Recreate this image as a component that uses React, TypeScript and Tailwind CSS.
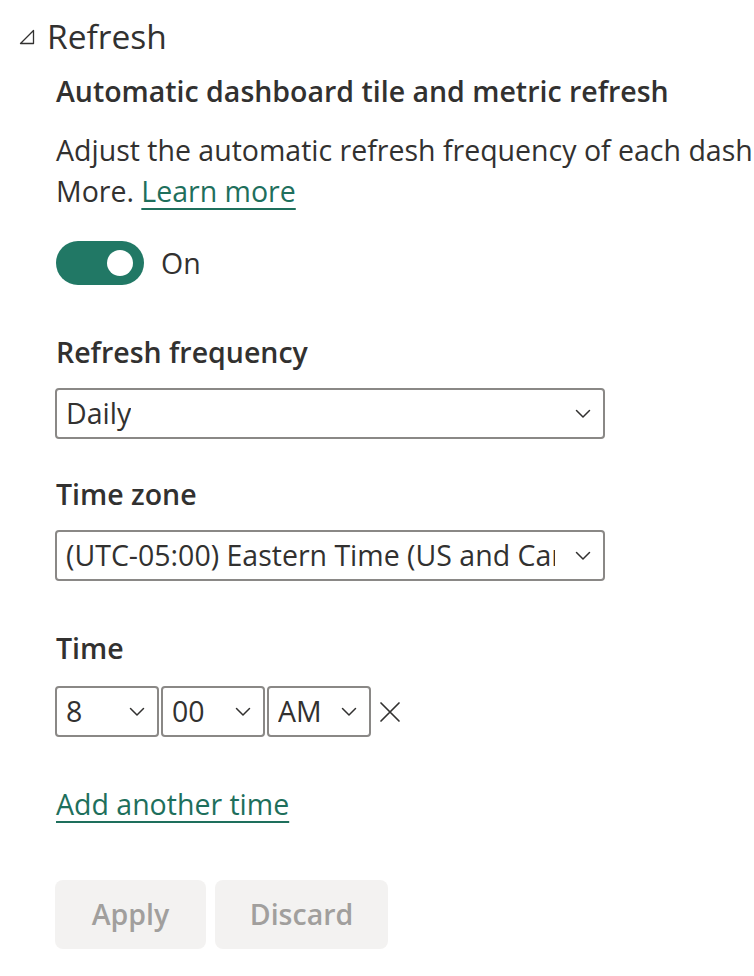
import React, { useState } from 'react';

const Chevron = () => (
  <svg width="16" height="10" viewBox="0 0 16 10" fill="none" className="shrink-0">
    <path d="M1.5 1.5 L8 8 L14.5 1.5" stroke="#323130" strokeWidth="1.5" strokeLinecap="round" strokeLinejoin="round" />
  </svg>
);

const Select = ({ value, className }: { value: string; className: string }) => (
  <div
    className={`flex items-center justify-between gap-[20px] h-[51px] border-2 border-[#8a8886] rounded-[4px] pl-[9px] pr-[12px] text-[28.5px] text-[#323130] whitespace-nowrap ${className}`}
  >
    <span className="overflow-hidden">{value}</span>
    <Chevron />
  </div>
);

const App = () => {
  const [on, setOn] = useState(true);

  return (
    <div className="w-[754px] h-[976px] overflow-hidden bg-white text-[#323130] font-['Segoe_UI','Open_Sans',sans-serif]">
      <div className="flex items-center pt-[12px] pl-[19px] h-[60px]">
        <svg width="16" height="16" viewBox="0 0 16 16" fill="none" className="mt-[2px]">
          <path d="M14.5 1.5 L14.5 14.5 L1.5 14.5 Z" stroke="#323130" strokeWidth="1.3" strokeLinejoin="round" />
        </svg>
        <span className="ml-[12px] text-[33.5px] leading-[48px]">Refresh</span>
      </div>

      <div className="pl-[56px]">
        <div className="mt-[11px] text-[28.5px] leading-[40px] font-semibold whitespace-nowrap">
          Automatic dashboard tile and metric refresh
        </div>

        <div className="mt-[19px] text-[28.5px] leading-[41px] whitespace-nowrap">
          Adjust the automatic refresh frequency of each dashboard tile and metric. Refresh Now is still available in
          <br />
          More.{' '}
          <a href="#" className="text-[#1e6f5c] underline underline-offset-[6px] decoration-2">
            Learn more
          </a>
        </div>

        <div className="mt-[29px] flex items-center h-[44px]">
          <button
            onClick={() => setOn(!on)}
            className={`relative w-[88px] h-[44px] rounded-full ${on ? 'bg-[#217865]' : 'bg-[#8a8886]'}`}
          >
            <span
              className={`absolute top-[9px] w-[26px] h-[26px] rounded-full bg-white ${on ? 'left-[51px]' : 'left-[11px]'}`}
            />
          </button>
          <span className="ml-[17px] text-[28.5px]">{on ? 'On' : 'Off'}</span>
        </div>

        <div className="mt-[47px] text-[28.5px] leading-[40px] font-semibold">Refresh frequency</div>
        <Select value="Daily" className="mt-[16px] w-[550px] -ml-[1px]" />

        <div className="mt-[35px] text-[28.5px] leading-[40px] font-semibold">Time zone</div>
        <Select value="(UTC-05:00) Eastern Time (US and Canada)" className="mt-[16px] w-[550px] -ml-[1px]" />

        <div className="mt-[47px] text-[28.5px] leading-[40px] font-semibold">Time</div>
        <div className="mt-[18px] flex items-center -ml-[1px] gap-[2px]">
          <Select value="8" className="w-[104px]" />
          <Select value="00" className="w-[104px]" />
          <Select value="AM" className="w-[104px]" />
          <svg width="22" height="22" viewBox="0 0 22 22" className="ml-[6px]">
            <path d="M2 2 L20 20 M20 2 L2 20" stroke="#323130" strokeWidth="1.7" strokeLinecap="round" />
          </svg>
        </div>

        <div className="mt-[47px] leading-[40px]">
          <a href="#" className="text-[28.5px] text-[#1e6f5c] underline underline-offset-[6px] decoration-2">
            Add another time
          </a>
        </div>

        <div className="mt-[51px] flex gap-[9px] -ml-[1px]">
          <button className="w-[151px] h-[69px] rounded-[8px] bg-[#f3f2f1] text-[#a19f9d] text-[28.5px] font-semibold">
            Apply
          </button>
          <button className="w-[173px] h-[69px] rounded-[8px] bg-[#f3f2f1] text-[#a19f9d] text-[28.5px] font-semibold">
            Discard
          </button>
        </div>
      </div>
    </div>
  );
};

export default App;
